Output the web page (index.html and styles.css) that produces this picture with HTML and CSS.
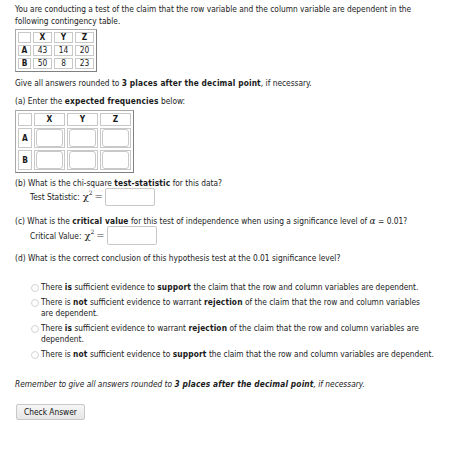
FILE: index.html
```html
<!DOCTYPE html>
<html>
<head>
<meta charset="utf-8">
<link rel="stylesheet" href="styles.css">
</head>
<body>
<div class="page">
  <p class="intro">You are conducting a test of the claim that the row variable and the column variable are dependent in the following contingency table.</p>
  <table class="data">
    <tr><td class="corner"></td><th>X</th><th>Y</th><th>Z</th></tr>
    <tr><th>A</th><td>43</td><td>14</td><td>20</td></tr>
    <tr><th>B</th><td>50</td><td>8</td><td>23</td></tr>
  </table>
  <p class="note">Give all answers rounded to <b>3 places after the decimal point</b>, if necessary.</p>
  <p class="q qa">(a) Enter the <b>expected frequencies</b> below:</p>
  <table class="exp">
    <tr><td class="corner"></td><th>X</th><th>Y</th><th>Z</th></tr>
    <tr><th>A</th><td><span class="box"></span></td><td><span class="box"></span></td><td><span class="box"></span></td></tr>
    <tr><th>B</th><td><span class="box"></span></td><td><span class="box"></span></td><td><span class="box"></span></td></tr>
  </table>
  <p class="q qb">(b) What is the chi-square <b>test-statistic</b> for this data?</p>
  <div class="answer ans1">Test Statistic: <span class="math">χ<sup>2</sup></span><span class="eq">=</span><span class="field"></span></div>
  <p class="q qc">(c) What is the <b>critical value</b> for this test of independence when using a significance level of <span class="alpha">α</span> = 0.01?</p>
  <div class="answer ans2">Critical Value: <span class="math">χ<sup>2</sup></span><span class="eq">=</span><span class="field"></span></div>
  <p class="q qd">(d) What is the correct conclusion of this hypothesis test at the 0.01 significance level?</p>
  <ul class="options">
    <li><span class="radio"></span><span class="opt">There <b>is</b> sufficient evidence to <b>support</b> the claim that the row and column variables are dependent.</span></li>
    <li><span class="radio"></span><span class="opt">There is <b>not</b> sufficient evidence to warrant <b>rejection</b> of the claim that the row and column variables are dependent.</span></li>
    <li><span class="radio"></span><span class="opt">There <b>is</b> sufficient evidence to warrant <b>rejection</b> of the claim that the row and column variables are dependent.</span></li>
    <li><span class="radio"></span><span class="opt one-line">There is <b>not</b> sufficient evidence to <b>support</b> the claim that the row and column variables are dependent.</span></li>
  </ul>
  <p class="remember">Remember to give all answers rounded to <b>3 places after the decimal point</b>, if necessary.</p>
  <button class="check">Check Answer</button>
</div>
</body>
</html>
```
FILE: styles.css
```css
html, body {
  margin: 0;
  padding: 0;
  background: #fff;
}
.page {
  font-family: "DejaVu Sans Condensed", "DejaVu Sans", sans-serif;
  font-size: 8.3px;
  line-height: 12px;
  color: #1a1a1a;
  padding: 3px 0 0 15px;
  width: 420px;
}
p { margin: 0; }
b { font-weight: bold; letter-spacing: 0.15px; }
.intro { width: 406px; }
table {
  border-collapse: separate;
  border-spacing: 2px;
  border: 1px solid #a8a8a8;
  border-right-color: #808080;
  border-bottom-color: #808080;
  text-align: center;
}
table td, table th {
  border: 1px solid #c8c8c8;
  padding: 0;
  font-size: 8.3px;
  line-height: 9px;
}
table th { font-weight: bold; }
.data { margin-top: 2px; }
.data td, .data th { width: 17px; height: 9px; }
.data .corner, .data tr > th:first-child { width: 11px; }
.data td { font-weight: normal; }
.note { margin-top: 5px; }
.qa { margin-top: 6px; }
.exp { margin-top: 3px; }
.exp th, .exp td { width: 29px; height: 11px; line-height: 11px; }
.exp .corner, .exp tr > th:first-child { width: 12px; }
.exp tr + tr td, .exp tr + tr th { height: 18px; }
.box {
  display: block;
  width: 25px;
  height: 16px;
  margin: 0 auto;
  border: 1px solid #c8c8c8;
  border-radius: 3px;
  background: #fff;
}
.qb { margin-top: 5px; line-height: 10px; }
.answer {
  display: flex;
  align-items: center;
  padding-left: 15px;
}
.ans1 { height: 18px; }
.ans2 { height: 19px; }
.math {
  font-family: "DejaVu Serif", "Liberation Serif", serif;
  font-size: 10px;
  margin-left: 3px;
}
.math sup { font-size: 6px; vertical-align: 5px; line-height: 0; }
.eq {
  font-family: "DejaVu Serif", serif;
  font-size: 10px;
  color: #444;
  margin: 0 2px 0 2px;
}
.field {
  display: block;
  width: 48px;
  height: 16px;
  border: 1px solid #c8c8c8;
  border-radius: 2px;
}
.ans2 .field { height: 17px; }
.qc { margin-top: 10px; line-height: 10px; }
.alpha { font-family: "DejaVu Serif", serif; font-style: italic; font-size: 9px; }
.qd { margin-top: 7px; }
.options {
  list-style: none;
  margin: 18px 0 0 0;
  padding: 0 0 0 16px;
}
.options li {
  display: flex;
  align-items: flex-start;
  line-height: 11px;
  margin-bottom: 4px;
}
.options li:last-child { margin-bottom: 0; }
.opt { max-width: 388px; }
.opt.one-line { max-width: none; white-space: nowrap; }
.radio {
  flex: none;
  width: 6px;
  height: 6px;
  border: 1px solid #d4d4d4;
  border-radius: 50%;
  margin: 2px 2px 0 0;
}
.remember {
  font-style: italic;
  margin-top: 18px;
}
.check {
  display: block;
  margin: 14px 0 0 1px;
  font-family: "DejaVu Sans Condensed", "DejaVu Sans", sans-serif;
  font-size: 8.3px;
  height: 16px;
  padding: 0 7px;
  color: #111;
  background: linear-gradient(#f6f6f6, #e6e6e6);
  border: 1px solid #c8c8c8;
  border-radius: 2px;
}
```
